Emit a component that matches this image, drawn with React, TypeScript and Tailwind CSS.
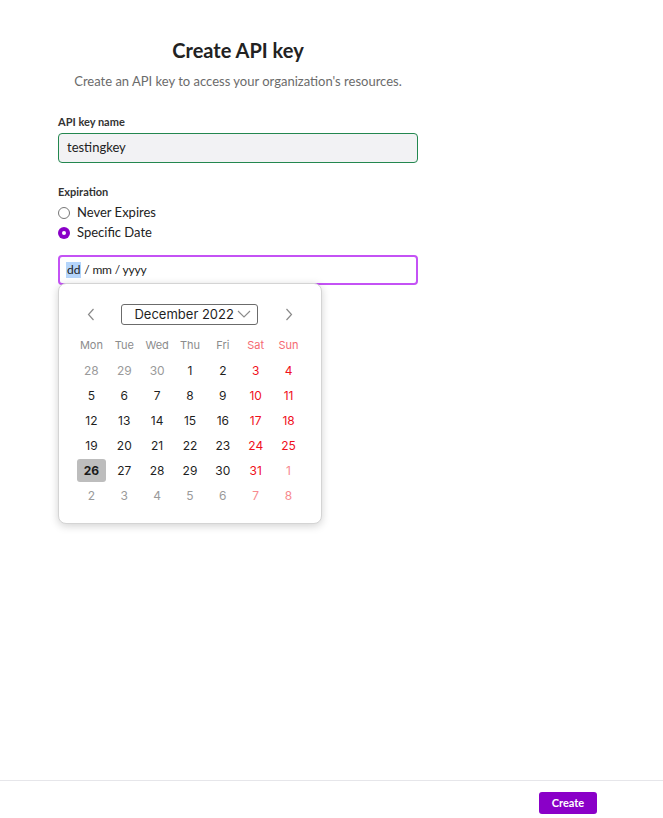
import React from "react";

const weeks: { d: number; out: boolean }[][] = [
  [28, 29, 30, 1, 2, 3, 4].map((d, i) => ({ d, out: i < 3 })),
  [5, 6, 7, 8, 9, 10, 11].map((d) => ({ d, out: false })),
  [12, 13, 14, 15, 16, 17, 18].map((d) => ({ d, out: false })),
  [19, 20, 21, 22, 23, 24, 25].map((d) => ({ d, out: false })),
  [26, 27, 28, 29, 30, 31, 1].map((d, i) => ({ d, out: i === 6 })),
  [2, 3, 4, 5, 6, 7, 8].map((d) => ({ d, out: true })),
];

const days = ["Mon", "Tue", "Wed", "Thu", "Fri", "Sat", "Sun"];

function dayClass(col: number, out: boolean, selected: boolean) {
  const weekend = col >= 5;
  if (selected) return "bg-[#bdbdbd] rounded-[3px] font-bold text-[#1a1a1a]";
  if (out) return weekend ? "text-[#f78a8f]" : "text-[#9a9a9a]";
  return weekend ? "text-[#f0101c]" : "text-[#1f1f1f]";
}

function Calendar() {
  return (
    <div className="absolute left-0 top-[28px] w-[264px] h-[241px] bg-white rounded-[8px] border border-[#d4d4d4] shadow-[0_2px_8px_rgba(0,0,0,0.18)] px-[16px] pt-[19px] font-['Inter',sans-serif] z-10">
      <div className="grid grid-cols-7 h-[22px] items-center">
        <div className="flex justify-center">
          <svg width="8" height="13" viewBox="0 0 8 13" fill="none">
            <path d="M6.5 1 L1.5 6.5 L6.5 12" stroke="#8a8a8a" strokeWidth="1.2" />
          </svg>
        </div>
        <div className="col-span-5 flex justify-center">
          <div className="w-[137px] h-[21px] border border-[#6b6b6b] rounded-[3px] flex items-center pl-[12px] pr-[6px] text-[13px] text-[#1f1f1f]">
            <span className="flex-1 leading-none">December 2022</span>
            <svg width="14" height="8" viewBox="0 0 14 8" fill="none">
              <path d="M1 1 L7 7 L13 1" stroke="#8a8a8a" strokeWidth="1.1" />
            </svg>
          </div>
        </div>
        <div className="flex justify-center">
          <svg width="8" height="13" viewBox="0 0 8 13" fill="none">
            <path d="M1.5 1 L6.5 6.5 L1.5 12" stroke="#8a8a8a" strokeWidth="1.2" />
          </svg>
        </div>
      </div>
      <div className="grid grid-cols-7 mt-[8px]">
        {days.map((d, i) => (
          <div
            key={d}
            className={`h-[25px] flex items-center justify-center text-[11px] ${i >= 5 ? "text-[#f56a72]" : "text-[#8c8c8c]"}`}
          >
            {d}
          </div>
        ))}
        {weeks.map((w, r) =>
          w.map((c, i) => {
            const selected = r === 4 && i === 0;
            return (
              <div key={`${r}-${i}`} className="h-[25px] flex items-center justify-center">
                <div
                  className={`w-[29px] h-[23px] flex items-center justify-center text-[12px] ${dayClass(i, c.out, selected)}`}
                >
                  {c.d}
                </div>
              </div>
            );
          })
        )}
      </div>
    </div>
  );
}

export default function App() {
  return (
    <div className="h-[818px] flex flex-col bg-white font-['Lato',sans-serif]">
      <div className="flex-1 pt-[36px]">
        <div className="ml-[58px] w-[360px]">
          <h1 className="text-center text-[20px] leading-[28px] font-bold text-[#222]">Create API key</h1>
          <p className="text-center text-[13px] leading-[20px] text-[#6b6b6b] mt-[7px]">
            Create an API key to access your organization's resources.
          </p>

          <div className="mt-[24px] text-[11px] leading-[14px] font-bold text-[#333]">API key name</div>
          <div className="mt-[4px] h-[30px] rounded-[4px] border border-[#23874f] bg-[#f2f2f4] flex items-center px-[8px] text-[13px] text-[#222]">
            testingkey
          </div>

          <div className="mt-[22px] text-[11px] leading-[14px] font-bold text-[#333]">Expiration</div>
          <div className="mt-[4px] flex items-center h-[20px] gap-[7px] text-[13px] text-[#222]">
            <span className="w-[12px] h-[12px] rounded-full border border-[#777] bg-white" />
            Never Expires
          </div>
          <div className="flex items-center h-[20px] gap-[7px] text-[13px] text-[#222]">
            <span className="w-[12px] h-[12px] rounded-full bg-[#8a00c8] flex items-center justify-center">
              <span className="w-[4px] h-[4px] rounded-full bg-white" />
            </span>
            Specific Date
          </div>

          <div className="relative mt-[12px]">
            <div className="h-[30px] rounded-[4px] border-2 border-[#c452f5] flex items-center px-[6px] text-[12px] text-[#222]">
              <span className="bg-[#b5d5fb] px-[1px] leading-[16px]">dd</span>
              <span className="tracking-[-0.2px]">&nbsp;/ mm / yyyy</span>
            </div>
            <Calendar />
          </div>
        </div>
      </div>
      <div className="h-[38px] border-t border-[#e6e6ea] flex items-start justify-end pr-[66px] pt-[11px]">
        <button className="h-[22px] w-[58px] rounded-[3px] bg-[#8a00c8] text-white text-[11px] font-bold">
          Create
        </button>
      </div>
    </div>
  );
}
